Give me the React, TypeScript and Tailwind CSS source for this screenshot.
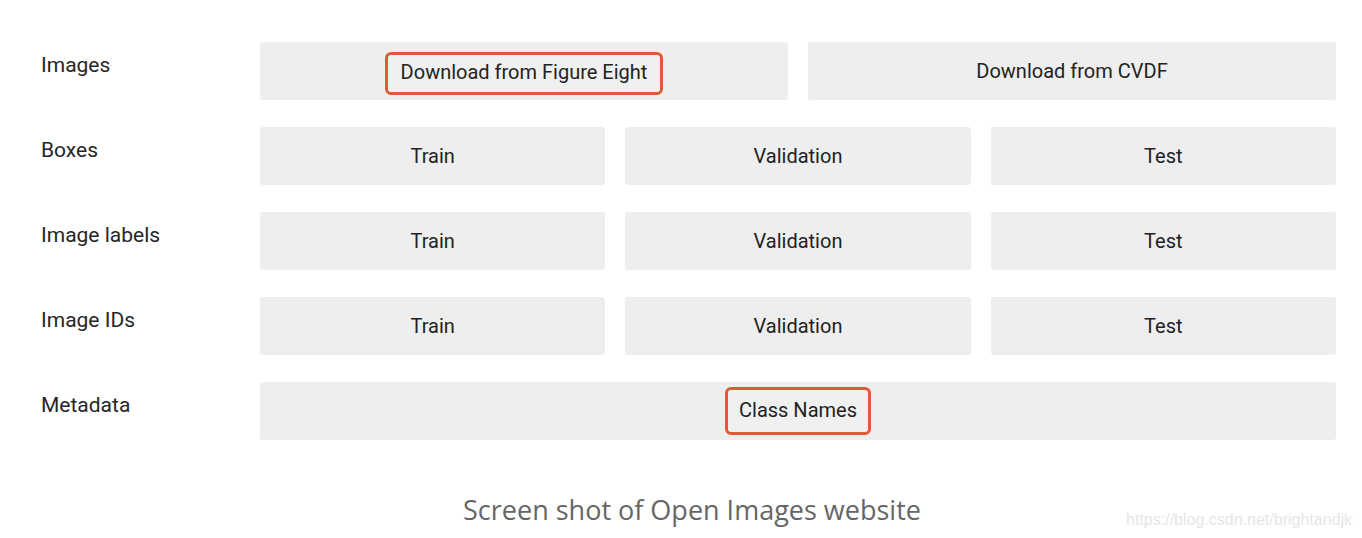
import React from 'react';

type Btn = { text: string; mark?: string };

const rows: { label: string; buttons: Btn[] }[] = [
  {
    label: 'Images',
    buttons: [
      { text: 'Download from Figure Eight', mark: 'inline-block mt-[5px] px-[13px] pt-[5px] pb-[8px]' },
      { text: 'Download from CVDF' },
    ],
  },
  { label: 'Boxes', buttons: [{ text: 'Train' }, { text: 'Validation' }, { text: 'Test' }] },
  { label: 'Image labels', buttons: [{ text: 'Train' }, { text: 'Validation' }, { text: 'Test' }] },
  { label: 'Image IDs', buttons: [{ text: 'Train' }, { text: 'Validation' }, { text: 'Test' }] },
  { label: 'Metadata', buttons: [{ text: 'Class Names', mark: 'px-[11px] pt-[8px] pb-[10px]' }] },
];

export default function App() {
  return (
    <div className="relative w-[1362px] h-[538px] bg-white overflow-hidden font-['Roboto',sans-serif]">
      <div className="flex flex-col gap-[27px] pt-[42px] pl-[41px] pr-[26px]">
        {rows.map((row) => (
          <div key={row.label} className="flex">
            <div className="w-[219px] shrink-0 pt-[10px] text-[21px] leading-[26px] text-[#262626]">
              {row.label}
            </div>
            <div className="flex flex-1 gap-[20px]">
              {row.buttons.map((b, i) => (
                <div
                  key={i}
                  className="flex-1 h-[58px] flex items-center justify-center rounded-[3px] bg-[#eeeeee] text-[20px] leading-[24px] text-[#222]"
                >
                  {b.mark ? (
                    <span className={`border-[3px] border-[#e05a38] rounded-[6px] bg-[#f0f0f0] ${b.mark}`}>
                      {b.text}
                    </span>
                  ) : (
                    b.text
                  )}
                </div>
              ))}
            </div>
          </div>
        ))}
      </div>
      <div className="mt-[52px] pl-[22px] text-center font-['Open_Sans',sans-serif] text-[27px] leading-[36px] text-[#666]">
        Screen shot of Open Images website
      </div>
      <div className="absolute right-[10px] bottom-[8px] font-['Liberation_Sans',sans-serif] text-[16px] leading-[20px] text-[#e6e6e6]">
        https://blog.csdn.net/brightandjk
      </div>
    </div>
  );
}
